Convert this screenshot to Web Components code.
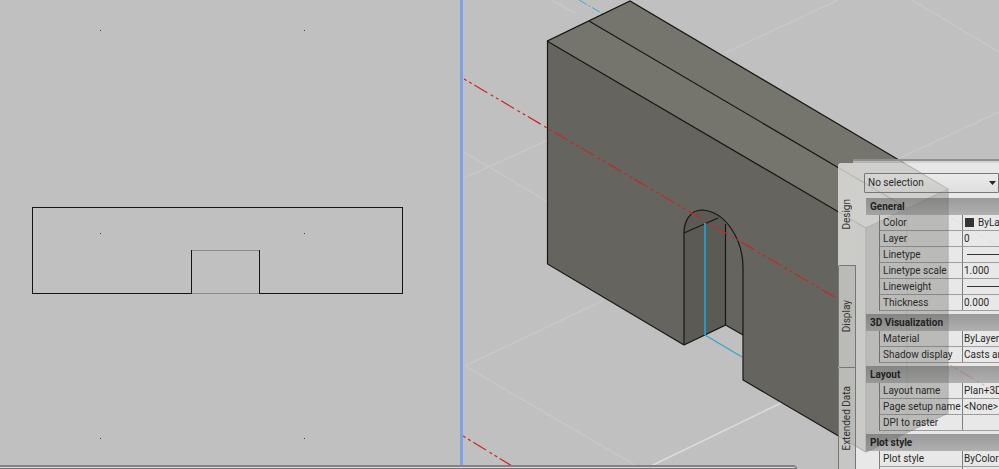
<!DOCTYPE html>
<html lang="en">
<head>
<meta charset="utf-8">
<title>Wall opening</title>
<style>
html, body { height: 100%; margin: 0; }
body { font: 10px/16px Roboto, "Open Sans", sans-serif; color: #2a2a2a; background: #c0c0c0; overflow: hidden; }
</style>
</head>
<body>
<cad-workspace>
  <plan-view slot="plan"></plan-view>
  <model-view slot="model"></model-view>
  <property-palette slot="palette">
    <property-group name="General">
      <property-row name="Color" value="ByLayer" kind="swatch"></property-row>
      <property-row name="Layer" value="0"></property-row>
      <property-row name="Linetype" kind="line"></property-row>
      <property-row name="Linetype scale" value="1.000"></property-row>
      <property-row name="Lineweight" kind="line"></property-row>
      <property-row name="Thickness" value="0.000"></property-row>
    </property-group>
    <property-group name="3D Visualization">
      <property-row name="Material" value="ByLayer"></property-row>
      <property-row name="Shadow display" value="Casts and"></property-row>
    </property-group>
    <property-group name="Layout">
      <property-row name="Layout name" value="Plan+3D"></property-row>
      <property-row name="Page setup name" value="&lt;None&gt;"></property-row>
      <property-row name="DPI to raster" value=""></property-row>
    </property-group>
    <property-group name="Plot style">
      <property-row name="Plot style" value="ByColor"></property-row>
      <property-row name="" value=""></property-row>
    </property-group>
  </property-palette>
</cad-workspace>
<script>
class View extends HTMLElement {
  constructor() {
    super();
    this.attachShadow({ mode: "open" }).innerHTML = this.constructor.markup;
  }
}

customElements.define("cad-workspace", class extends View {
  static markup = `
  <style>
    :host { display: flex; position: relative; height: 100vh; overflow: hidden; }
    .plan { flex: 460 1 0; min-width: 0; display: flex; }
    .model { flex: 536 1 0; min-width: 0; display: flex; }
    .split { flex: 0 0 3px; background: #7f9fe6; }
    .edge { position: absolute; left: 0; right: 202px; bottom: 0; height: 2px; background: #dcdcdc;
            border: 1px solid #747274; border-top: 2px solid #838183; border-left: 0; border-bottom: 0;
            border-radius: 0 4px 0 0; box-shadow: inset 0 -1px #747274; }
    .palette { position: absolute; right: 0; top: 159px; bottom: 0; width: 161px; display: flex; }
  </style>
  <div class="plan"><slot name="plan"></slot></div>
  <div class="split"></div>
  <div class="model"><slot name="model"></slot></div>
  <div class="edge"></div>
  <div class="palette"><slot name="palette"></slot></div>`;
});

customElements.define("plan-view", class extends View {
  static markup = `
  <style>:host { display: block; flex: 1; min-width: 0; } svg { display: block; width: 100%; height: 100%; }</style>
  <svg viewBox="0 0 460 469" preserveAspectRatio="xMinYMin slice" fill="none" shape-rendering="crispEdges">
    <path d="M191.5 293.5H32.5V207.5H402.5V293.5H259.5V250M191.5 250V294" stroke="#151515"/>
    <path d="M192 250.500H259M192 293.500H259" stroke="#8b8b8b"/>
    <path d="M100 30.500h1M304 30.500h1M100 233.500h1M304 233.500h1M100 438.500h1M304 438.500h1" stroke="#3c3c3c"/>
  </svg>`;
});

customElements.define("model-view", class extends View {
  static markup = `
  <style>:host { display: block; flex: 1; min-width: 0; } svg { display: block; width: 100%; height: 100%; }</style>
  <svg viewBox="463 0 536 469" preserveAspectRatio="xMinYMin slice" fill="none">
    <path d="M464 178L548 140M464 152L548 202M465 366L604 300M465 366L635 465M725 53L838 0M912 0L999 52M900 158L999 112M552 0L575 13" stroke="#c7c7c7" stroke-width="1.500"/>
    <path d="M651 466L781 403" stroke="#dcdcdc" stroke-width="1.500"/>
    <path d="M579 0L605 15" stroke="#3fa9cf" stroke-dasharray="9 2 2 2"/>
    <path d="M950 217L999 247" stroke="#7fb9cd" stroke-dasharray="9 2 2 2"/>
    <path d="M547 41L630 1L948 189L866 228Z" fill="#75746d"/>
    <path d="M547.500 41L866 228V452L743 380V335L725.500 325L684 345L547.500 264Z" fill="#65645e"/>
    <path d="M866 228L948 189V413L866 452Z" fill="#33322e"/>
    <path d="M684 345V233C685 220 691 210 702 210C712 210 720 216 725.500 224V325Z" fill="#5c5a54"/>
    <g stroke="#171714" stroke-width="1.200">
      <path d="M684 345L547.500 264V41L630 1L948 189V413L866 452L743 380V268C743 239 725 211 702 210C691 210 684 220 684 233V345"/>
      <path d="M547 41L866 228V452M866 228L948 189M589 21L907 208V432M684 345L725.500 325V224M725.500 325L743 335M684 233L718 218"/>
    </g>
    <path d="M705 223V335" stroke="#259abc" stroke-width="2"/>
    <path d="M705 335L742 357" stroke="#36a4c5" stroke-width="1.300"/>
    <path d="M464 79L838 299M950 365L999 394" stroke="#c42828" stroke-width="1.200" stroke-dasharray="3 3 3 3 15 4"/>
    <path d="M463 436L512 466" stroke="#c42828" stroke-width="1.200" stroke-dasharray="3 3 3 3 15 4"/>
  </svg>`;
});

customElements.define("property-palette", class extends View {
  static markup = `
  <style>
    :host { display: grid; grid-template: 4px 1fr / 18px 1fr; flex: 1; min-width: 0; overflow: hidden; }
    .top { grid-column: 1 / -1; margin-left: 15px; background: rgba(225,225,225,.6); border-top: 2px solid #8f8f8f; box-sizing: border-box; }
    nav { display: flex; flex-direction: column; background: rgba(232,232,230,.78); border-radius: 3px 0 0 0; overflow: hidden; }
    nav button { flex: 0 0 102px; box-sizing: border-box; padding: 0; margin: 0; font: inherit; color: #333;
      background: rgba(160,160,160,.4); border: 1px solid #777; border-bottom-width: 0; writing-mode: vertical-rl; display: flex;
      align-items: center; justify-content: center; border-radius: 2px 0 0 0; }
    nav button[aria-selected=true] { background: none; border-color: transparent; }
    nav span { transform: rotate(180deg); }
    main { min-width: 0; overflow: hidden; padding: 10px 0 0 8px; background: rgba(250,250,250,.68); }
    select { appearance: none; display: block; width: 100%; height: 20px; box-sizing: border-box; margin: 0 0 5px; padding: 0 0 0 3px;
      font: inherit; color: #2a2a2a; border: 1px solid #777; border-radius: 1px;
      background: linear-gradient(rgba(245,245,245,.2), rgba(200,200,200,.3)); }
    .pick { position: relative; }
    .pick svg { position: absolute; right: 3px; top: 8px; pointer-events: none; }
    .groups { margin-left: 2px; }
  </style>
  <div class="top"></div>
  <nav role="tablist">
    <button role="tab" aria-selected="true"><span>Design</span></button>
    <button role="tab" aria-selected="false"><span>Display</span></button>
    <button role="tab" aria-selected="false"><span>Extended Data</span></button>
    <button role="tab" aria-selected="false" aria-label="More"></button>
  </nav>
  <main>
    <div class="pick"><select aria-label="Selection"><option>No selection</option></select>
      <svg width="7" height="4"><path d="M0 0H7L3.500 4Z" fill="#252525"/></svg></div>
    <div class="groups"><slot></slot></div>
  </main>`;
});

customElements.define("property-group", class extends View {
  static markup = `
  <style>
    :host { display: block; margin-bottom: 3px; }
    button { display: block; width: 100%; height: 17px; padding: 0 4px; border: 0; font: inherit; font-weight: 700; line-height: 17px;
      text-align: left; color: #222; background: linear-gradient(rgba(90,90,90,.55), rgba(120,120,120,.5)); }
    .rows { margin-left: 13px; }
  </style>
  <button type="button" aria-expanded="true"></button><div class="rows"><slot></slot></div>`;
  connectedCallback() { this.shadowRoot.querySelector("button").textContent = this.getAttribute("name"); }
});

customElements.define("property-row", class extends View {
  static markup = `
  <style>
    :host { display: grid; grid-template-columns: 82px minmax(0, 1fr); height: 16px; box-sizing: border-box;
      border-bottom: 1px solid rgba(95,95,95,.55); border-left: 1px solid rgba(80,80,80,.7); }
    label { padding-left: 3px; white-space: nowrap; line-height: 15px; }
    .value { display: flex; align-items: center; border-left: 1px solid rgba(80,80,80,.7); padding-left: 1px; min-width: 0; overflow: hidden; }
    input { flex: 1; min-width: 0; height: 15px; padding: 0; border: 0; background: none; font: inherit; line-height: 15px; color: #2a2a2a; }
    i { display: none; flex: none; }
    :host([kind=swatch]) i { display: block; width: 9px; height: 9px; margin: 0 4px 0 1px; background: #333; }
    :host([kind=line]) i { display: block; width: 60px; height: 1px; margin-left: 3px; background: #333; }
    :host([kind=line]) input { display: none; }
  </style>
  <label for="v"></label><div class="value"><i></i><input id="v"></div>`;
  connectedCallback() {
    this.shadowRoot.querySelector("label").textContent = this.getAttribute("name");
    this.shadowRoot.querySelector("input").value = this.getAttribute("value") || "";
  }
});
</script>
</body>
</html>
